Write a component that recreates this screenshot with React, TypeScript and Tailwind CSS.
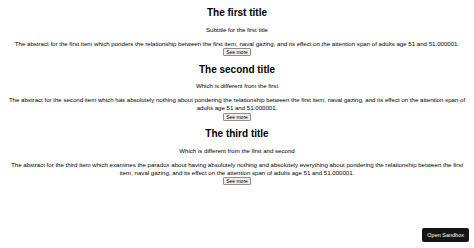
const items = [
  {
    title: "The first title",
    subtitle: "Subtitle for the first title",
    abstract:
      "The abstract for the first item which ponders the relationship between the first item, naval gazing, and its effect on the attention span of adults age 51 and 51.000001.",
  },
  {
    title: "The second title",
    subtitle: "Which is different from the first",
    abstract:
      "The abstract for the second item which has absolutely nothing about pondering the relationship between the first item, naval gazing, and its effect on the attention span of adults age 51 and 51.000001.",
  },
  {
    title: "The third title",
    subtitle: "Which is different from the first and second",
    abstract:
      "The abstract for the third item which examines the paradox about having absolutely nothing and absolutely everything about pondering the relationship between the first item, naval gazing, and its effect on the attention span of adults age 51 and 51.000001.",
  },
];

export default function App() {
  return (
    <div className="relative min-h-[248px] bg-white text-black font-['Liberation_Sans',Arial,sans-serif]">
      <div className="flex flex-col items-center px-[6px] pt-[7px] text-center">
        {items.map((item) => (
          <div key={item.title} className="flex flex-col items-center pb-[7.5px]">
            <h2 className="text-[10px] font-bold leading-[12px]">{item.title}</h2>
            <p className="mt-[6.5px] text-[6.1px] leading-[8px]">{item.subtitle}</p>
            <p className="mt-[6px] text-[6.1px] leading-[8px]">{item.abstract}</p>
            <button className="mt-[0.5px] h-[8px] rounded-[1px] border border-[#8f8f8f] bg-[#efefef] px-[2px] text-[5px] leading-[6px]">
              See more
            </button>
          </div>
        ))}
      </div>
      <button className="absolute bottom-[6px] right-[5px] rounded-[2px] bg-[#151515] px-[5px] py-[4px] text-[5.5px] leading-[6px] text-white">
        Open Sandbox
      </button>
    </div>
  );
}
